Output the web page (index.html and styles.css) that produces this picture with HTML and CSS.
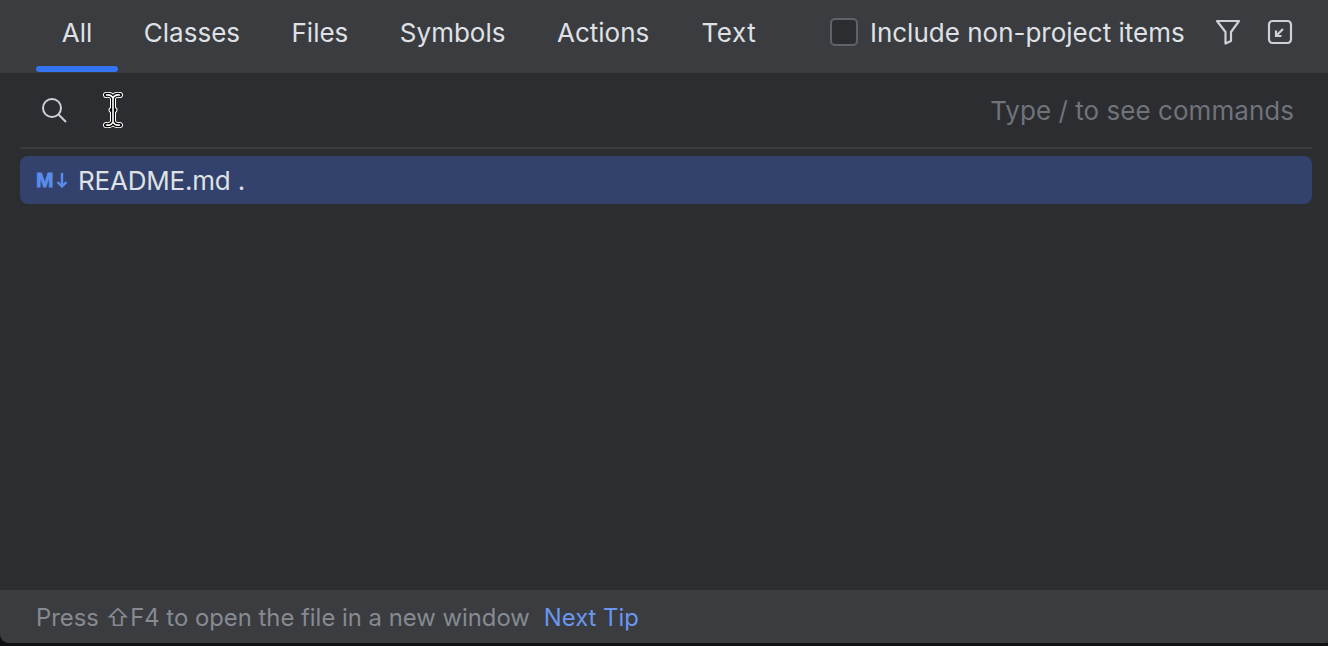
FILE: index.html
```html
<!DOCTYPE html>
<html lang="en">
<head>
<meta charset="utf-8">
<title>Search Everywhere</title>
<link rel="stylesheet" href="styles.css">
</head>
<body>
<div class="popup">
  <header class="header">
    <nav class="tabs">
      <a class="tab tab-active">All</a>
      <a class="tab">Classes</a>
      <a class="tab">Files</a>
      <a class="tab">Symbols</a>
      <a class="tab">Actions</a>
      <a class="tab tab-text">Text</a>
    </nav>
    <div class="options">
      <span class="checkbox"></span>
      <span class="option-label">Include non-project items</span>
      <svg class="icon-filter" width="26" height="28" viewBox="0 0 26 28" fill="none" stroke="#ced0d6" stroke-width="2.200"><path d="M2 3H24L16 14V23L10.500 25.500V14Z" stroke-linejoin="round"/></svg>
      <svg class="icon-collapse" width="26" height="26" viewBox="0 0 26 26" fill="none" stroke="#ced0d6" stroke-width="2.200"><rect x="2" y="2" width="22" height="22" rx="3.500"/><path d="M16 10L9 17M9 11.500V17H14.500"/></svg>
    </div>
  </header>
  <div class="search">
    <svg class="icon-search" width="28" height="28" viewBox="0 0 28 28" fill="none" stroke="#ced0d6" stroke-width="2"><circle cx="12" cy="12" r="9"/><path d="M18.500 18.500L26 26"/></svg>
    <span class="hint">Type / to see commands</span>
  </div>
  <div class="results">
    <div class="result">
      <span class="md-icon">M<svg width="12" height="16" viewBox="0 0 12 16" fill="none" stroke="#5a8ced" stroke-width="2.400"><path d="M6 1V15M1.500 10L6 14.500L10.500 10"/></svg></span>
      <span class="result-name">README.md .</span>
    </div>
  </div>
  <footer class="footer">
    <span class="tip">Press ⇧F4 to open the file in a new window</span>
    <a class="next-tip">Next Tip</a>
  </footer>
  <svg class="cursor" width="20" height="36" viewBox="0 0 20 36" fill="none" stroke-linejoin="round" stroke-linecap="round"><path d="M3 3C6 2.500 8.500 3 10 6C11.500 3 14 2.500 17 3M3 33C6 33.500 8.500 33 10 30C11.500 33 14 33.500 17 33M10 6V30M8.500 18H11.500" stroke="#fff" stroke-width="6"/><path d="M3 3C6 2.500 8.500 3 10 6C11.500 3 14 2.500 17 3M3 33C6 33.500 8.500 33 10 30C11.500 33 14 33.500 17 33M10 6V30M8.500 18H11.500" stroke="#000" stroke-width="4"/><path d="M3.500 3C6 2.500 8.500 3 10 6C11.500 3 14 2.500 16.500 3M3.500 33C6 33.500 8.500 33 10 30C11.500 33 14 33.500 16.500 33M10 6V30" stroke="#fff" stroke-width="1.600"/></svg>
</div>
</body>
</html>
```
FILE: styles.css
```css
* { box-sizing: border-box; }
html, body { margin: 0; height: 100%; background: #101113; overflow: hidden; }
body { font-family: Inter, "Noto Sans", sans-serif; font-size: 26px; }
.popup {
  position: relative;
  display: flex;
  flex-direction: column;
  height: 643px;
  background: #2b2d31;
  border-radius: 0 0 2px 9px;
  overflow: hidden;
}
.header {
  display: flex;
  align-items: stretch;
  height: 73px;
  padding-left: 36px;
  background: #3a3c40;
}
.tabs { display: flex; }
.tab {
  position: relative;
  padding: 17px 25.750px 0;
  color: #dfe1e5;
  line-height: 32px;
}
.tab-text { padding-left: 26.500px; padding-right: 22.500px; letter-spacing: 0.600px; }
.tab-active::after {
  content: "";
  position: absolute;
  left: 0;
  right: 0;
  bottom: 1px;
  height: 6px;
  border-radius: 3px;
  background: #3574f0;
}
.options {
  display: flex;
  align-items: flex-start;
  margin-left: 51px;
  padding-top: 16px;
}
.checkbox {
  width: 28px;
  height: 28px;
  margin-top: 2px;
  border: 2px solid #5f6266;
  border-radius: 5px;
  background: #2b2d31;
}
.option-label { margin-left: 12px; margin-top: 1px; color: #dfe1e5; line-height: 32px; }
.icon-filter { margin-left: 30px; margin-top: 2px; }
.icon-collapse { margin-left: 26px; margin-top: 3px; }
.search {
  display: flex;
  align-items: center;
  justify-content: space-between;
  height: 76px;
  margin: 0 16px 0 20px;
  padding: 0 18px 0 20px;
  border-bottom: 2px solid #3a3c40;
}
.hint { color: #6f737a; line-height: 32px; margin-top: 2px; letter-spacing: 0.040px; }
.results { flex: 1; padding: 7px 16px 0 20px; }
.result {
  display: flex;
  align-items: center;
  height: 48px;
  padding-left: 16px;
  border-radius: 8px;
  background: #33426c;
}
.md-icon {
  display: flex;
  align-items: center;
  gap: 2px;
  width: 42px;
  color: #5a8ced;
  font-family: "Liberation Sans", sans-serif;
  font-size: 21px;
  font-weight: 700;
  -webkit-text-stroke: 0.800px #5a8ced;
}
.result-name { color: #dfe1e5; letter-spacing: -0.2px; }
.footer {
  display: flex;
  align-items: center;
  gap: 14px;
  height: 53px;
  padding: 2px 36px 0;
  background: #3a3c40;
  font-size: 23.850px;
}
.tip { color: #868a91; }
.next-tip { color: #6a96ee; }
.cursor { position: absolute; left: 103px; top: 92px; }
```
